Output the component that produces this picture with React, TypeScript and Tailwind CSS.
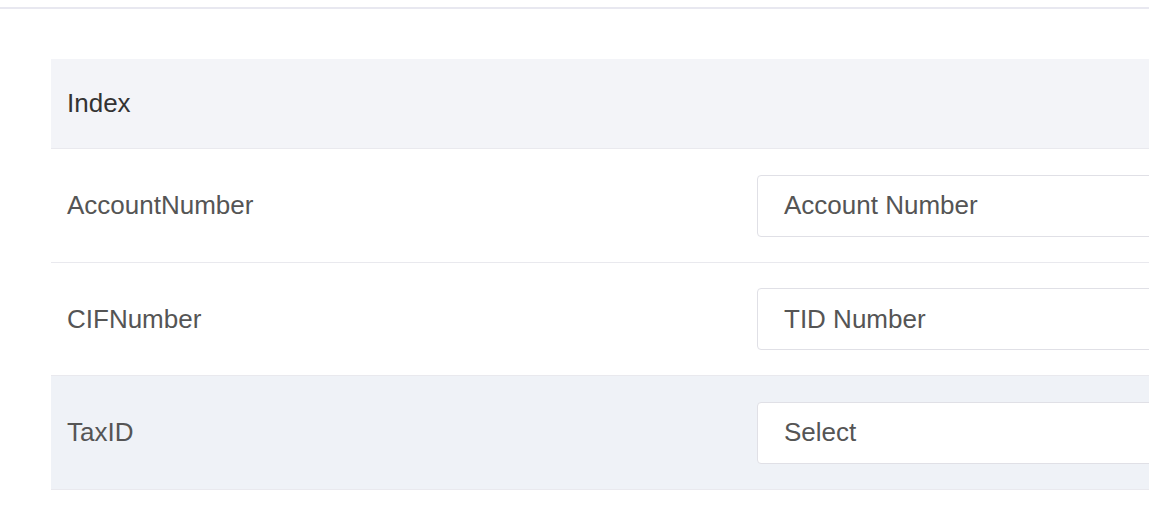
const rows = [
  { label: 'AccountNumber', placeholder: 'Account Number', striped: false, h: 'h-[114px]' },
  { label: 'CIFNumber', placeholder: 'TID Number', striped: false, h: 'h-[113px]' },
  { label: 'TaxID', placeholder: 'Select', striped: true, h: 'h-[114px]' },
];

export default function App() {
  return (
    <div className="w-[1149px] h-[511px] overflow-hidden bg-white font-['Liberation_Sans',Arial,sans-serif]">
      <div className="h-[7px]" />
      <div className="h-[2px] bg-[#e8e8f0]" />

      <div className="pt-[50px] pl-[51px]">
        <div className="w-[1200px]">
          {/* header */}
          <div className="h-[90px] flex items-center pl-[16px] bg-[#f3f4f8] border-b border-[#e9e9ee] text-[26px] text-[#333]">
            Index
          </div>

          {rows.map((r) => (
            <div
              key={r.label}
              className={`${r.h} flex items-center border-b border-[#e9e9ee] ${r.striped ? 'bg-[#eff2f7]' : 'bg-white'}`}
            >
              <div className="w-[706px] pl-[16px] text-[26px] text-[#555]">{r.label}</div>
              <div className="flex-1">
                <div className="h-[62px] flex items-center pl-[26px] bg-white border border-[#e0e0e6] rounded-[4px] text-[26px] text-[#555]">
                  {r.placeholder}
                </div>
              </div>
            </div>
          ))}
        </div>
      </div>
    </div>
  );
}
